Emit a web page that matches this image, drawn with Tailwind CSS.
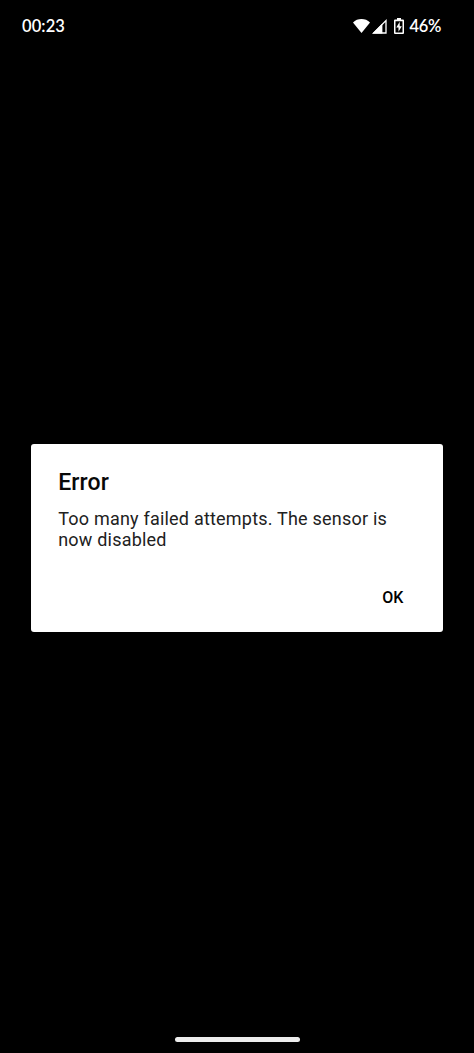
<!DOCTYPE html>
<html lang="en">
<head>
    <meta charset="UTF-8">
    <meta name="viewport" content="width=device-width, initial-scale=1.0">
    <title>Error</title>
    <script src="https://cdn.jsdelivr.net/npm/@tailwindcss/browser@4"></script>
</head>
<body class="bg-black h-screen flex flex-col overflow-hidden font-['Roboto',sans-serif]">
    <!-- Status bar -->
    <header class="h-[52px] shrink-0 flex items-center justify-between pl-[22px] pr-[33px] text-white font-['Lato',sans-serif] text-[16.5px] leading-6 font-semibold">
        <span class="tracking-[0.1px]">00:23</span>
        <div class="flex items-center">
            <svg class="w-[17px] h-[14px]" viewBox="0 0 17 14" fill="#fff"><path d="M8.5 14 0 3.4C2.3 1.2 5.2 0 8.5 0S14.7 1.2 17 3.4Z"/></svg>
            <svg class="w-[15px] h-[15px] ml-[2px]" viewBox="0 0 15 15"><path d="M14 1.6V14H1.6Z" fill="none" stroke="#fff" stroke-width="1.3"/><path d="M0.4 14.6 10.4 4.6V14.6Z" fill="#fff"/></svg>
            <svg class="w-[10px] h-[16px] ml-[7px]" viewBox="0 0 10 16"><path d="M3 0H7V1.6H9Q10 1.6 10 2.6V15Q10 16 9 16H1Q0 16 0 15V2.6Q0 1.6 1 1.6H3ZM1.5 3.2V14.4H8.5V3.2Z" fill="#fff" fill-rule="evenodd"/><path d="M5.7 3.8 2.3 9.4H4.5V13.8L7.8 8.2H5.7Z" fill="#fff"/></svg>
            <span class="ml-[5px] tracking-[-0.3px]">46%</span>
        </div>
    </header>

    <!-- Dialog -->
    <main class="flex-1 px-[30.7px] pt-[392.4px]">
        <div class="h-[188px] bg-white rounded-[3px] flex flex-col pl-[27.5px] pr-[40px] pt-[25px] pb-[22px]">
            <h1 class="text-[23px] leading-7 font-medium tracking-[0.15px] text-[#080808]">Error</h1>
            <p class="mt-[11px] text-lg leading-[21px] tracking-[0.21px] text-[#212121]">Too many failed attempts. The sensor is<br>now disabled</p>
            <button class="mt-auto self-end text-base leading-6 font-medium text-black">OK</button>
        </div>
    </main>

    <!-- Gesture bar -->
    <footer class="shrink-0 flex justify-center pb-[11.5px]">
        <div class="w-[125px] h-[5px] rounded-full bg-[#ededed]"></div>
    </footer>
</body>
</html>
